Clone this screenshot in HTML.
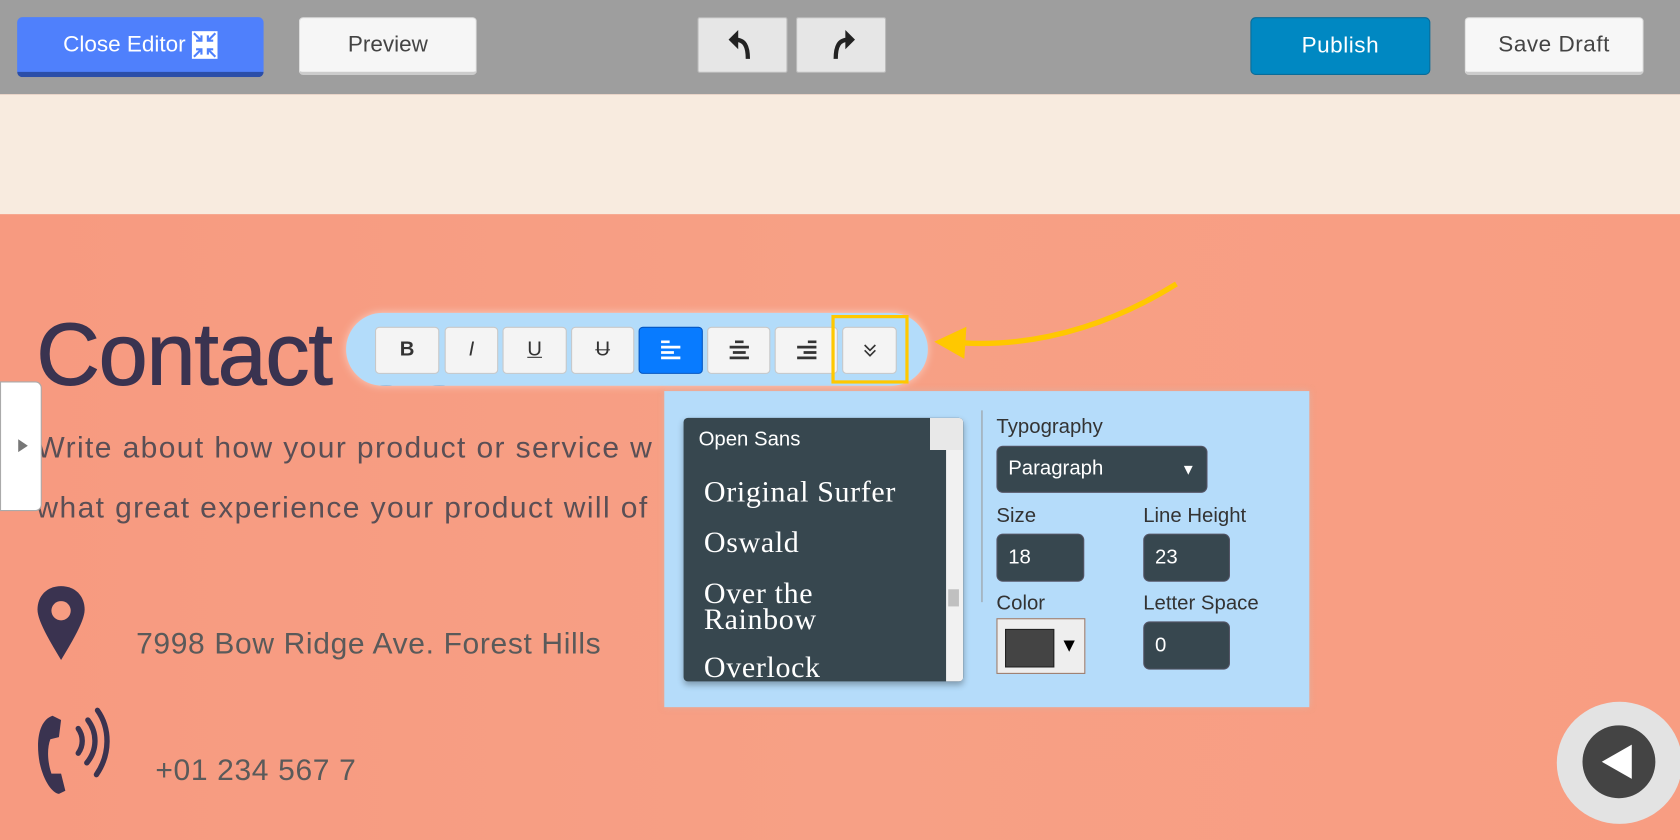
<!DOCTYPE html>
<html><head><meta charset="utf-8"><style>
html,body{margin:0;padding:0;width:1680px;height:840px;overflow:hidden;background:#f79d82}
#w{position:absolute;left:0;top:0;width:1568px;height:784px;transform:scale(1.071429);transform-origin:0 0;font-family:"Liberation Sans",sans-serif;overflow:hidden}
.a{position:absolute;box-sizing:border-box}
.btn{position:absolute;box-sizing:border-box;border-radius:4px;display:flex;align-items:center;justify-content:center;font-size:21px}
.tb{position:absolute;top:305px;height:44px;background:#f4f4f4;border:1px solid #c8c8c8;border-radius:4px;box-sizing:border-box;display:flex;align-items:center;justify-content:center;color:#333;font-size:19px}
.lbl{position:absolute;font-size:19px;color:#333}
.inp{position:absolute;background:#37474f;border:1px solid #556;border-radius:6px;color:#fff;font-size:19px;box-sizing:border-box;padding-left:10px;display:flex;align-items:center}
.it{position:absolute;left:657px;font-family:"Liberation Serif",serif;font-size:28px;letter-spacing:0.6px;color:#fff;line-height:24px}
</style></head><body><div id="w">
<div class="a" style="left:0;top:0;width:1568px;height:88px;background:#9e9e9e"></div>
<div class="a" style="left:0;top:88px;width:1568px;height:112px;background:#f8ebdf"></div>
<div class="a" style="left:0;top:200px;width:1568px;height:584px;background:linear-gradient(90deg,#f79a80,#f7a085 50%,#f89d82)"></div>

<div class="btn" style="left:16px;top:16px;width:230px;height:56px;background:#4f80fc;border-bottom:5px solid #2b4ea8;color:#fff;border-radius:5px">Close Editor&nbsp;<svg width="24" height="26" viewBox="0 0 24 26"><rect width="24" height="26" fill="#fff"/><path d="M2 2l7 7M9 4v5H4M22 2l-7 7M15 4v5h5M2 24l7-7M9 22v-5H4M22 24l-7-7M15 22v-5h5" stroke="#4f80fc" stroke-width="2" fill="none"/></svg></div>
<div class="btn" style="left:279px;top:16px;width:166px;height:54px;background:#f6f6f6;border:1px solid #ddd;border-bottom:3px solid #ccc;color:#444">Preview</div>
<div class="btn" style="left:651px;top:16px;width:84px;height:52px;background:#e6e6e6;border:1px solid #bbb;border-radius:2px"><svg width="30" height="34" viewBox="0 0 30 34"><path d="M20 30 C20 18 17 12 8 12" fill="none" stroke="#222" stroke-width="4"/><path d="M2 12 L11 3 L11 21Z" fill="#222"/></svg></div>
<div class="btn" style="left:743px;top:16px;width:84px;height:52px;background:#e6e6e6;border:1px solid #bbb;border-radius:2px"><svg width="30" height="34" viewBox="0 0 30 34"><path d="M10 30 C10 18 13 12 22 12" fill="none" stroke="#222" stroke-width="4"/><path d="M28 12 L19 3 L19 21Z" fill="#222"/></svg></div>
<div class="btn" style="left:1167px;top:16px;width:168px;height:54px;background:#0088c2;border:1px solid #0a6c99;color:#fff;border-radius:5px;letter-spacing:0.5px">Publish</div>
<div class="btn" style="left:1367px;top:16px;width:167px;height:54px;background:#f7f7f7;border:1px solid #ddd;border-bottom:3px solid #ccc;color:#444;letter-spacing:0.5px">Save Draft</div>

<div class="a" style="left:34px;top:285px;font-size:82px;color:#3a3350;letter-spacing:-1px;white-space:nowrap;-webkit-text-stroke:1px #3a3350">Contact Us</div>
<div class="a" style="left:34px;top:390px;font-size:28px;letter-spacing:1.3px;color:#5a4f55;line-height:56px;white-space:nowrap">Write about how your product or service w<br>what great experience your product will of</div>
<div class="a" style="left:0;top:356px;width:39px;height:121px;background:#fff;border:1px solid #aaa;border-radius:0 6px 6px 0"><div style="position:absolute;left:16px;top:53px;border-left:9px solid #777;border-top:6px solid transparent;border-bottom:6px solid transparent"></div></div>

<div class="a" style="left:323px;top:292px;width:543px;height:68px;background:#b3dcfa;border-radius:34px;box-shadow:0 0 8px rgba(255,255,255,.5)"></div>
<div class="tb" style="left:350px;width:60px;font-weight:bold">B</div>
<div class="tb" style="left:415px;width:50px;font-style:italic">I</div>
<div class="tb" style="left:469px;width:60px;text-decoration:underline">U</div>
<div class="tb" style="left:533px;width:59px;text-decoration:line-through">U</div>
<div class="tb" style="left:596px;width:60px;background:#087bff;border-color:#0455c0"><svg width="22" height="20"><path d="M2 2h8M2 7h18M2 12h12M2 17h18" stroke="#fff" stroke-width="2.5"/></svg></div>
<div class="tb" style="left:660px;width:59px"><svg width="22" height="20"><path d="M7 2h8M2 7h18M5 12h12M2 17h18" stroke="#333" stroke-width="2.5"/></svg></div>
<div class="tb" style="left:723px;width:59px"><svg width="22" height="20"><path d="M12 2h8M2 7h18M8 12h12M2 17h18" stroke="#333" stroke-width="2.5"/></svg></div>
<div class="tb" style="left:786px;width:51px"><svg width="14" height="14"><path d="M2 2l5 5 5-5M2 7l5 5 5-5" stroke="#333" stroke-width="1.5" fill="none"/></svg></div>
<div class="a" style="left:776px;top:294px;width:72px;height:64px;border:3px solid #ffc800"></div>
<svg class="a" style="left:860px;top:255px" width="250" height="80"><path d="M238 10 C190 40 120 70 38 65" fill="none" stroke="#ffc800" stroke-width="5"/><path d="M12 64 L42 50 L40 80Z" fill="#ffc800"/></svg>

<div class="a" style="left:620px;top:365px;width:602px;height:295px;background:#b5dcfa;box-shadow:0 0 6px rgba(200,200,200,.5)"></div>
<div class="a" style="left:638px;top:390px;width:261px;height:246px;background:#37474f;border-radius:4px;box-shadow:0 3px 6px rgba(0,0,0,.3);overflow:hidden">
 <div class="a" style="left:0;top:0;width:230px;height:30px;color:#fff;font-size:19px;padding:11px 0 0 14px;line-height:20px">Open Sans</div>
 <div class="a" style="left:230px;top:0;width:31px;height:30px;background:#e8e8e8"></div>
 <div class="a" style="left:245px;top:30px;width:16px;height:216px;background:#f1f1f1"></div>
 <div class="a" style="left:247px;top:160px;width:10px;height:16px;background:#c0c0c0"></div>
</div>
<div class="it" style="top:448px">Original Surfer</div>
<div class="it" style="top:495px">Oswald</div>
<div class="it" style="top:543px">Over the<br>Rainbow</div>
<div class="it" style="top:612px;height:22px;overflow:hidden">Overlock</div>
<div class="a" style="left:916px;top:383px;width:1px;height:179px;background:#999"></div>
<div class="lbl" style="left:930px;top:388px">Typography</div>
<div class="inp" style="left:930px;top:416px;width:197px;height:44px">Paragraph<span style="position:absolute;right:10px;font-size:14px">▼</span></div>
<div class="lbl" style="left:930px;top:471px">Size</div>
<div class="lbl" style="left:1067px;top:471px">Line Height</div>
<div class="inp" style="left:930px;top:498px;width:82px;height:45px">18</div>
<div class="inp" style="left:1067px;top:498px;width:81px;height:45px">23</div>
<div class="lbl" style="left:930px;top:553px">Color</div>
<div class="lbl" style="left:1067px;top:553px">Letter Space</div>
<div class="a" style="left:930px;top:577px;width:83px;height:52px;background:#eee;border:1px solid #9a7a6a"><div class="a" style="left:7px;top:9px;width:46px;height:36px;background:#444;border:1px solid #222"></div><span style="position:absolute;left:58px;top:14px;font-size:18px">▼</span></div>
<div class="inp" style="left:1067px;top:580px;width:81px;height:45px">0</div>

<svg class="a" style="left:33px;top:546px" width="50" height="72" viewBox="0 0 50 72"><path d="M24 1 C11 1 2 10 2 23 C2 33 12 50 24 70 C36 50 46 33 46 23 C46 10 37 1 24 1Z" fill="#3a3350"/><circle cx="24" cy="24" r="9" fill="#f79d82"/></svg>
<div class="a" style="left:127px;top:585px;font-size:28px;letter-spacing:0.6px;color:#5a5a5a;white-space:nowrap">7998 Bow Ridge Ave. Forest Hills</div>
<svg class="a" style="left:33px;top:660px" width="70" height="86" viewBox="0 0 70 86"><path d="M16 8 C4 12 0 30 4 52 C8 70 16 80 22 81 L28 78 L24 62 L15 62 C11 50 11 38 14 30 L22 28 L24 12Z" fill="#3a3350"/><path d="M40 20 C45 27 45 36 40 43" stroke="#3a3350" stroke-width="5" fill="none" stroke-linecap="round"/><path d="M49 12 C58 24 58 40 48 52" stroke="#3a3350" stroke-width="5" fill="none" stroke-linecap="round"/><path d="M58 3 C70 20 70 44 57 63" stroke="#3a3350" stroke-width="5" fill="none" stroke-linecap="round"/></svg>
<div class="a" style="left:145px;top:703px;font-size:28px;letter-spacing:0.6px;color:#5a5a5a;white-space:nowrap">+01 234 567 7</div>

<div class="a" style="left:1453px;top:655px;width:117px;height:114px;border-radius:50%;background:#e3e3e3"></div>
<div class="a" style="left:1477px;top:677px;width:68px;height:68px;border-radius:50%;background:#444"></div>
<div class="a" style="left:1495px;top:695px;border-right:28px solid #fff;border-top:16px solid transparent;border-bottom:16px solid transparent"></div>
</div></body></html>
